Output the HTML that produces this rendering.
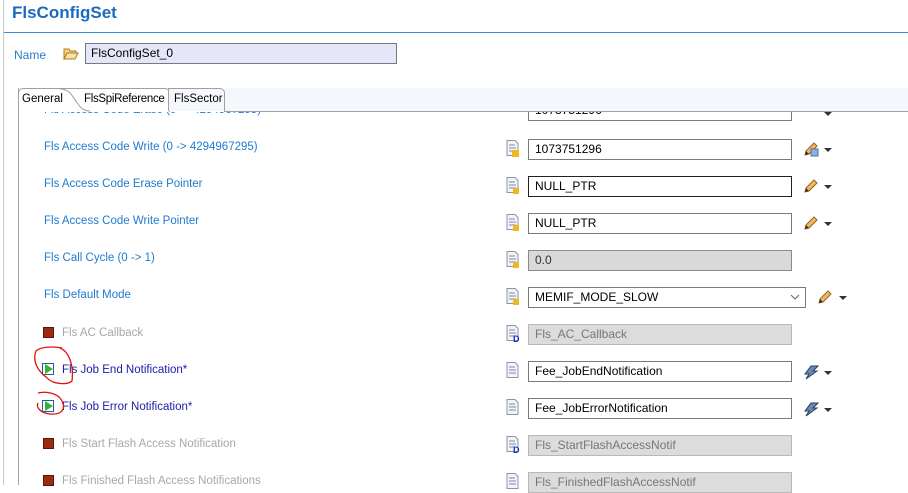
<!DOCTYPE html>
<html><head><style>
body{margin:0;width:908px;height:485px;overflow:hidden;background:#fff;font-family:"Liberation Sans",sans-serif;position:relative}
.a{position:absolute}
.lbl{position:absolute;left:44px;font-size:11.5px;color:#1e7bd0;white-space:nowrap;line-height:14px}
.dis{color:#a8a8a8}
.job{color:#1c1ca8}
.tb{position:absolute;left:528px;width:256px;height:19px;border:1px solid #7a7a7a;background:#fff;font-size:12px;line-height:19px;padding-left:6px;box-sizing:content-box;color:#000;white-space:nowrap;overflow:hidden}
.g{background:#dcdcdc;border-color:#b8b8b8;color:#777}
.arr{position:absolute;width:0;height:0;border-left:4px solid transparent;border-right:4px solid transparent;border-top:4px solid #333}
.sq{position:absolute;left:43px;width:9px;height:9px;background:#9a2a10;border:1px solid #5a1608}
</style></head><body>
<div class="a" style="left:3px;top:0;width:1px;height:485px;background:#c8c8c8"></div>
<div class="a" style="left:12px;top:3px;font-size:17px;font-weight:bold;color:#1a6ac0">FlsConfigSet</div>
<div class="a" style="left:4px;top:32px;width:904px;height:1px;background:#3c8ad6"></div>
<div class="a" style="left:14px;top:48px;font-size:12px;color:#2a7ed0">Name</div>
<svg class="a" style="left:63px;top:47px" width="16" height="13"><path d="M1 2h5l1 2h6v2H4L1 12z" fill="#f3d38a" stroke="#b07a20"/><path d="M1 12l3-6h11l-3 6z" fill="#f8e2a4" stroke="#b07a20"/></svg>
<div class="a" style="left:85px;top:43px;width:305px;height:19px;border:1px solid #7a7a7a;background:#e6e6fa;font-size:12px;line-height:19px;padding-left:5px">FlsConfigSet_0</div>
<!-- tab area -->
<div class="a" style="left:224px;top:88px;width:684px;height:23px;background:#f4f7fc;border-bottom:1px solid #a0a0a0"></div>
<div class="a" style="left:18px;top:88px;width:1px;height:397px;background:#a0a0a0"></div>
<div class="a" style="left:18px;top:88px;width:150px;height:23px;border:1px solid #a0a0a0;border-bottom:none;border-radius:5px 5px 0 0;background:#fff"></div>
<div class="a" style="left:168px;top:88px;width:55px;height:22px;border:1px solid #a0a0a0;border-bottom:none;border-radius:0 5px 0 0;background:#f4f7fc"></div>
<svg class="a" style="left:60px;top:88px" width="30" height="24"><path d="M0 1 C10 1 12 8 18 16 C22 22 26 23 30 23" fill="none" stroke="#a0a0a0"/></svg>
<div class="a" style="left:22px;top:93px;font-size:11.5px">General</div>
<div class="a" style="left:84px;top:93px;font-size:11.5px;letter-spacing:-0.3px">FlsSpiReference</div>
<div class="a" style="left:174px;top:93px;font-size:11.5px">FlsSector</div>
<div class="a" style="left:19px;top:112px;width:889px;height:373px;overflow:hidden">
<div class="lbl" style="left:25px;top:-9px">Fls Access Code Erase (0 -> 4294967295)</div>
</div>
<div class="lbl" style="top:140px">Fls Access Code Write (0 -> 4294967295)</div>
<div class="lbl" style="top:177px">Fls Access Code Erase Pointer</div>
<div class="lbl" style="top:214px">Fls Access Code Write Pointer</div>
<div class="lbl" style="top:251px">Fls Call Cycle (0 -> 1)</div>
<div class="lbl" style="top:288px">Fls Default Mode</div>
<div class="sq" style="top:327px"></div><div class="lbl dis" style="left:62px;top:326px">Fls AC Callback</div>
<svg class="a" style="left:42px;top:363px" width="12" height="12"><rect x=".5" y=".5" width="11" height="11" fill="#fff" stroke="#2060a0"/><path d="M3 1l8 5-8 5z" fill="#3cb030"/></svg>
<div class="lbl job" style="left:62px;top:363px">Fls Job End Notification*</div>
<svg class="a" style="left:42px;top:400px" width="12" height="12"><rect x=".5" y=".5" width="11" height="11" fill="#fff" stroke="#2060a0"/><path d="M3 1l8 5-8 5z" fill="#3cb030"/></svg>
<div class="lbl job" style="left:62px;top:400px">Fls Job Error Notification*</div>
<div class="sq" style="top:438px"></div><div class="lbl dis" style="left:62px;top:437px">Fls Start Flash Access Notification</div>
<div class="sq" style="top:475px"></div><div class="lbl dis" style="left:62px;top:474px">Fls Finished Flash Access Notifications</div>
<svg class="a" style="left:28px;top:343px" width="60" height="80"><path d="M32 5C40 8 46 20 44 38C40 42 25 42 18 34C10 28 4 18 8 8C12 4 24 3 34 5M10 50C18 48 30 50 34 58C38 66 34 72 22 71C12 70 8 64 10 60" fill="none" stroke="#e21010" stroke-width="1.3"/></svg>
<!-- right column -->
<div style="position:absolute;left:0;top:112px;width:908px;height:373px;overflow:hidden">
<div class="tb" style="top:-12px">1073751296</div>
<div class="arr" style="left:824px;top:0px"></div>
</div>
<div class="tb" style="top:139px">1073751296</div>
<div class="tb" style="top:176px;border-color:#222">NULL_PTR</div>
<div class="tb" style="top:213px">NULL_PTR</div>
<div class="tb g" style="top:250px;background:#d9d9d9;border-color:#8a8a8a;color:#333">0.0</div>
<div class="tb" style="top:287px;width:270px">MEMIF_MODE_SLOW</div>
<svg class="a" style="left:790px;top:294px" width="10" height="6"><path d="M1 1l4 4 4-4" fill="none" stroke="#666"/></svg>
<div class="tb g" style="top:324px">Fls_AC_Callback</div>
<div class="tb" style="top:361px">Fee_JobEndNotification</div>
<div class="tb" style="top:398px">Fee_JobErrorNotification</div>
<div class="tb g" style="top:435px">Fls_StartFlashAccessNotif</div>
<div class="tb g" style="top:472px">Fls_FinishedFlashAccessNotif</div>
<!-- left icons -->
<svg width="0" height="0"><defs><g id="doc"><path d="M1 .5h8l3 3v12H1z" fill="#f4f4f8" stroke="#8a93a8"/><path d="M3 5h6M3 8h7M3 11h7" stroke="#7a8ab0"/></g></defs></svg>
<svg class="a" style="left:506px;top:140px" width="14" height="18"><use href="#doc"/><rect x="6" y="10" width="7" height="7" fill="#f0b820"/></svg>
<svg class="a" style="left:506px;top:177px" width="14" height="18"><use href="#doc"/><rect x="7" y="11" width="6" height="6" fill="#f0b820"/></svg>
<svg class="a" style="left:506px;top:214px" width="14" height="18"><use href="#doc"/><rect x="7" y="11" width="6" height="6" fill="#f0b820"/></svg>
<svg class="a" style="left:506px;top:251px" width="14" height="18"><use href="#doc"/><rect x="7" y="11" width="6" height="6" fill="#f0b820"/></svg>
<svg class="a" style="left:506px;top:288px" width="14" height="18"><use href="#doc"/><rect x="7" y="11" width="6" height="6" fill="#f0b820"/></svg>
<svg class="a" style="left:506px;top:325px" width="14" height="18"><use href="#doc"/><text x="7" y="17" font-size="9" font-weight="bold" fill="#1030c0" font-family="Liberation Sans">D</text></svg>
<svg class="a" style="left:506px;top:362px" width="14" height="18"><use href="#doc"/></svg>
<svg class="a" style="left:506px;top:399px" width="14" height="18"><use href="#doc"/></svg>
<svg class="a" style="left:506px;top:436px" width="14" height="18"><use href="#doc"/><text x="7" y="17" font-size="9" font-weight="bold" fill="#1030c0" font-family="Liberation Sans">D</text></svg>
<svg class="a" style="left:506px;top:473px" width="14" height="18"><use href="#doc"/></svg>
<!-- right action icons -->
<svg width="0" height="0"><defs><g id="pen"><path d="M2 14l1-4 8-8 3 3-8 8z" fill="#f0b860" stroke="#a06020"/><path d="M2 14l1-4 3 3z" fill="#333"/></g></defs></svg>
<svg class="a" style="left:803px;top:141px" width="16" height="16"><use href="#pen"/><rect x="8" y="8" width="7" height="7" fill="#8ab0e0" stroke="#4a70a0"/></svg>
<div class="arr" style="left:824px;top:148px"></div>
<svg class="a" style="left:803px;top:178px" width="16" height="16"><use href="#pen"/></svg><div class="arr" style="left:824px;top:185px"></div>
<svg class="a" style="left:803px;top:215px" width="16" height="16"><use href="#pen"/></svg><div class="arr" style="left:824px;top:222px"></div>
<svg class="a" style="left:817px;top:289px" width="16" height="16"><use href="#pen"/></svg><div class="arr" style="left:839px;top:296px"></div>
<svg class="a" style="left:803px;top:364px" width="16" height="16"><path d="M3 15l3-5H2l6-8h7l-5 5h4z" fill="#6a88b0" stroke="#2a4060"/></svg><div class="arr" style="left:824px;top:371px"></div>
<svg class="a" style="left:803px;top:401px" width="16" height="16"><path d="M3 15l3-5H2l6-8h7l-5 5h4z" fill="#6a88b0" stroke="#2a4060"/></svg><div class="arr" style="left:824px;top:408px"></div>
</body></html>
